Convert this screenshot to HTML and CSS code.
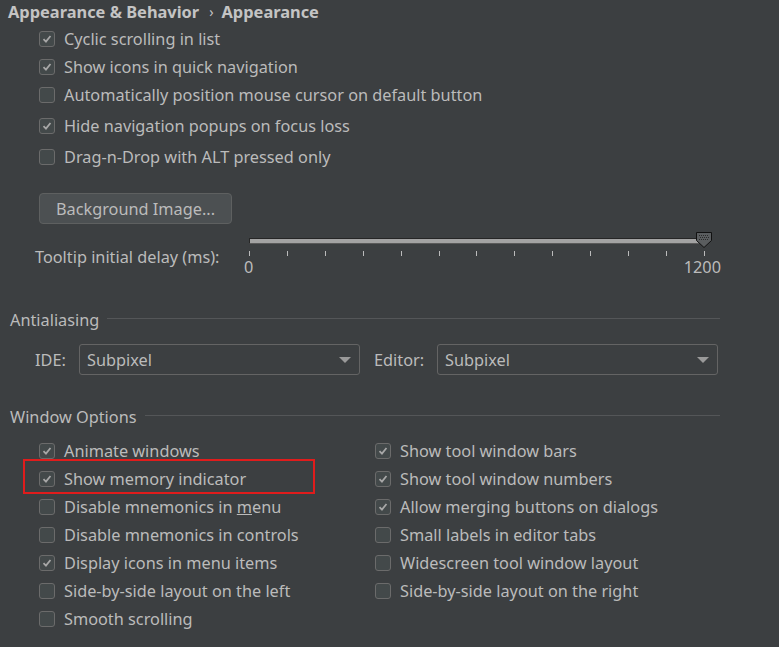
FILE: index.html
```html
<!DOCTYPE html>
<html>
<head>
<meta charset="utf-8">
<link rel="stylesheet" href="styles.css">
</head>
<body>
<div class="page">
  <div class="crumbs"><span>Appearance &amp; Behavior</span><span class="sep">›</span><span>Appearance</span></div>

  <div class="top-options">
    <div class="cb-row"><span class="cb on"><svg viewBox="0 0 16 16"><path d="M4 8.2 L6.8 11 L12 4.6"/></svg></span><span>Cyclic scrolling in list</span></div>
    <div class="cb-row"><span class="cb on"><svg viewBox="0 0 16 16"><path d="M4 8.2 L6.8 11 L12 4.6"/></svg></span><span>Show icons in quick navigation</span></div>
    <div class="cb-row"><span class="cb"></span><span>Automatically position mouse cursor on default button</span></div>
    <div class="cb-row gap"><span class="cb on"><svg viewBox="0 0 16 16"><path d="M4 8.2 L6.8 11 L12 4.6"/></svg></span><span>Hide navigation popups on focus loss</span></div>
    <div class="cb-row gap"><span class="cb"></span><span>Drag-n-Drop with ALT pressed only</span></div>
    <div class="btn">Background Image...</div>
  </div>

  <div class="slider-row">
    <div class="slider-label">Tooltip initial delay (ms):</div>
    <div class="slider">
      <div class="track"></div>
      <div class="thumb"><svg viewBox="0 0 16 16"><path class="thumb-body" d="M0.5 0.5 H15.5 V8.5 L8 15.5 L0.5 8.5 Z"/><g class="dots"><rect x="3" y="3" width="1" height="1"/><rect x="5" y="3" width="1" height="1"/><rect x="7" y="3" width="1" height="1"/><rect x="9" y="3" width="1" height="1"/><rect x="11" y="3" width="1" height="1"/><rect x="4" y="5" width="1" height="1"/><rect x="6" y="5" width="1" height="1"/><rect x="8" y="5" width="1" height="1"/><rect x="10" y="5" width="1" height="1"/><rect x="12" y="5" width="1" height="1"/><rect x="3" y="7" width="1" height="1"/><rect x="5" y="7" width="1" height="1"/><rect x="7" y="7" width="1" height="1"/><rect x="9" y="7" width="1" height="1"/><rect x="11" y="7" width="1" height="1"/></g></svg></div>
      <div class="ticks">
        <i></i><i></i><i></i><i></i><i></i><i></i><i></i><i></i><i></i><i></i><i></i><i></i><i></i>
      </div>
      <div class="tick-labels"><span>0</span><span class="max">1200</span></div>
    </div>
  </div>

  <div class="section-title first"><span>Antialiasing</span><div class="line"></div></div>
  <div class="combo-row">
    <span class="combo-label ide">IDE:</span>
    <div class="combo"><span>Subpixel</span><span class="arrow"></span></div>
    <span class="combo-label editor">Editor:</span>
    <div class="combo"><span>Subpixel</span><span class="arrow"></span></div>
  </div>

  <div class="section-title second"><span>Window Options</span><div class="line"></div></div>
  <div class="grid">
    <div class="col">
      <div class="cb-row"><span class="cb on"><svg viewBox="0 0 16 16"><path d="M4 8.2 L6.8 11 L12 4.6"/></svg></span><span>Animate windows</span></div>
      <div class="cb-row highlighted"><span class="cb on"><svg viewBox="0 0 16 16"><path d="M4 8.2 L6.8 11 L12 4.6"/></svg></span><span>Show memory indicator</span><span class="red-box"></span></div>
      <div class="cb-row"><span class="cb"></span><span>Disable mnemonics in <u>m</u>enu</span></div>
      <div class="cb-row"><span class="cb"></span><span>Disable mnemonics in controls</span></div>
      <div class="cb-row"><span class="cb on"><svg viewBox="0 0 16 16"><path d="M4 8.2 L6.8 11 L12 4.6"/></svg></span><span>Display icons in menu items</span></div>
      <div class="cb-row"><span class="cb"></span><span>Side-by-side layout on the left</span></div>
      <div class="cb-row"><span class="cb"></span><span>Smooth scrolling</span></div>
    </div>
    <div class="col right">
      <div class="cb-row"><span class="cb on"><svg viewBox="0 0 16 16"><path d="M4 8.2 L6.8 11 L12 4.6"/></svg></span><span>Show tool window bars</span></div>
      <div class="cb-row"><span class="cb on"><svg viewBox="0 0 16 16"><path d="M4 8.2 L6.8 11 L12 4.6"/></svg></span><span>Show tool window numbers</span></div>
      <div class="cb-row"><span class="cb on"><svg viewBox="0 0 16 16"><path d="M4 8.2 L6.8 11 L12 4.6"/></svg></span><span>Allow merging buttons on dialogs</span></div>
      <div class="cb-row"><span class="cb"></span><span>Small labels in editor tabs</span></div>
      <div class="cb-row"><span class="cb"></span><span>Widescreen tool window layout</span></div>
      <div class="cb-row"><span class="cb"></span><span>Side-by-side layout on the right</span></div>
    </div>
  </div>
</div>
</body>
</html>
```

FILE: styles.css
```css
html, body {
  margin: 0;
  padding: 0;
  background: #3c3f41;
}
.page {
  width: 779px;
  height: 647px;
  overflow: hidden;
  font-family: "Noto Sans", "Open Sans", sans-serif;
  font-size: 16.3px;
  color: #bbbbbb;
  box-sizing: border-box;
}
.crumbs {
  height: 23px;
  padding-left: 8px;
  display: flex;
  align-items: center;
  font-weight: bold;
  font-size: 16.4px;
  color: #c4c4c4;
}
.crumbs .sep {
  font-weight: normal;
  margin: 0 8px 0 10px;
  font-size: 14px;
}
.top-options {
  padding-left: 39px;
  margin-top: 2px;
}
.cb-row {
  height: 28px;
  display: flex;
  align-items: center;
  gap: 9px;
  position: relative;
}
.cb-row.gap { margin-top: 3px; }
.cb {
  width: 14px;
  height: 14px;
  border: 1px solid #6b6b6b;
  background: #43494a;
  border-radius: 3px;
  flex: none;
  display: flex;
}
.cb svg {
  width: 14px;
  height: 14px;
}
.cb svg path {
  fill: none;
  stroke: #a8a8a8;
  stroke-width: 2;
}
.btn {
  margin-top: 22px;
  width: 191px;
  height: 29px;
  border: 1px solid #5e6060;
  background: #4c5052;
  border-radius: 4px;
  display: flex;
  align-items: center;
  justify-content: center;
}
.slider-row {
  display: flex;
  margin-top: 8px;
  height: 50px;
}
.slider-label {
  width: 249px;
  padding-left: 35px;
  box-sizing: border-box;
  padding-top: 14px;
  flex: none;
}
.slider {
  position: relative;
  width: 472px;
}
.track {
  margin-top: 6px;
  width: 455px;
  height: 4px;
  background: #a3a3a3;
  border-top: 1px solid #262626;
  border-left: 1px solid #262626;
  border-bottom: 1px solid #5a5a5a;
  box-sizing: content-box;
}
.thumb {
  position: absolute;
  left: 447px;
  top: 0;
  width: 16px;
  height: 16px;
}
.thumb svg { width: 16px; height: 16px; display: block; }
.thumb-body { fill: #5a5d5f; stroke: #111111; stroke-width: 1; }
.dots rect { fill: #2a2a2a; }
.ticks {
  margin-top: 7px;
  width: 456px;
  display: flex;
  justify-content: space-between;
  height: 6px;
}
.ticks i {
  display: block;
  width: 1px;
  height: 5px;
  background: #bbbbbb;
}
.tick-labels {
  width: 477px;
  margin-left: -5px;
  display: flex;
  justify-content: space-between;
  margin-top: 1px;
  line-height: 18px;
}
.section-title {
  display: flex;
  align-items: center;
  padding-left: 10px;
  width: 720px;
  box-sizing: border-box;
  height: 22px;
}
.section-title.first { margin-top: 27px; }
.section-title.second { margin-top: 31px; }
.section-title .line {
  flex: 1;
  height: 1px;
  background: #545658;
  margin-left: 8px;
  margin-top: -3px;
}
.combo-row {
  display: flex;
  align-items: center;
  margin-top: 13px;
  height: 31px;
}
.combo-label.ide {
  padding-left: 35px;
  width: 79px;
  box-sizing: border-box;
}
.combo-label.editor {
  width: 77px;
  padding-left: 14px;
  box-sizing: border-box;
}
.combo {
  width: 281px;
  height: 31px;
  border: 1px solid #646464;
  border-radius: 3px;
  box-sizing: border-box;
  display: flex;
  align-items: center;
  justify-content: space-between;
  padding: 0 8px 0 7px;
}
.arrow {
  width: 0;
  height: 0;
  border-left: 6px solid transparent;
  border-right: 6px solid transparent;
  border-top: 6px solid #9a9a9a;
}
.grid {
  display: grid;
  grid-template-columns: 336px 1fr;
  padding-left: 39px;
  margin-top: 9px;
}
.red-box {
  position: absolute;
  left: -16px;
  top: -6px;
  width: 292px;
  height: 35px;
  border: 2px solid #e01c1c;
  box-sizing: border-box;
}
```
